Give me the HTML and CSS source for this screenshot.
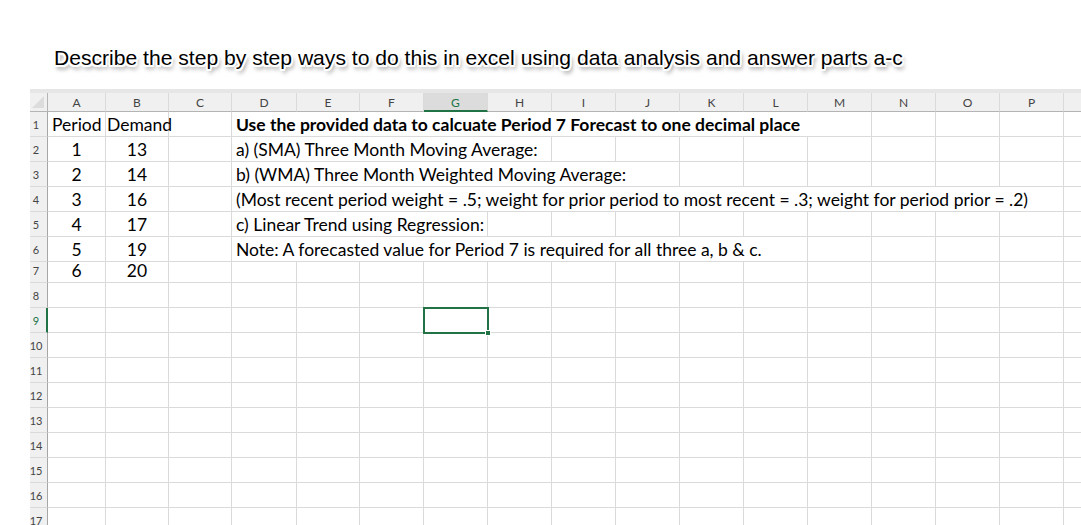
FILE: index.html
```html
<!DOCTYPE html>
<html>
<head>
<meta charset="utf-8">
<link rel="stylesheet" href="styles.css">
</head>
<body>
<div class="page">
  <div class="title">Describe the step by step ways to do this in excel using data analysis and answer parts a-c</div>
  <div class="sheet">
    <div class="strip"></div>
    <div class="grid">
      <div class="corner"><span class="tri"></span></div>
      <div class="ch">A</div><div class="ch">B</div><div class="ch">C</div><div class="ch">D</div><div class="ch">E</div><div class="ch">F</div><div class="ch sel">G</div><div class="ch">H</div><div class="ch">I</div><div class="ch">J</div><div class="ch">K</div><div class="ch">L</div><div class="ch">M</div><div class="ch">N</div><div class="ch">O</div><div class="ch">P</div><div class="ch"></div>

      <div class="rh">1</div><div class="c l">Period</div><div class="c l b0">Demand</div><div class="c"></div><div class="c l bold s10">Use the provided data to calcuate Period 7 Forecast to one decimal place</div><div class="c"></div><div class="c"></div><div class="c"></div><div class="c"></div>

      <div class="rh">2</div><div class="c n">1</div><div class="c n">13</div><div class="c"></div><div class="c l s5">a) (SMA) Three Month Moving Average:</div><div class="c"></div><div class="c"></div><div class="c"></div><div class="c"></div><div class="c"></div><div class="c"></div><div class="c"></div><div class="c"></div><div class="c"></div>

      <div class="rh">3</div><div class="c n">2</div><div class="c n">14</div><div class="c"></div><div class="c l s7">b) (WMA) Three Month Weighted Moving Average:</div><div class="c"></div><div class="c"></div><div class="c"></div><div class="c"></div><div class="c"></div><div class="c"></div><div class="c"></div>

      <div class="rh">4</div><div class="c n">3</div><div class="c n">16</div><div class="c"></div><div class="c l s13">(Most recent period weight = .5; weight for prior period to most recent = .3; weight for period prior = .2)</div><div class="c"></div>

      <div class="rh">5</div><div class="c n">4</div><div class="c n">17</div><div class="c"></div><div class="c l s4">c) Linear Trend using Regression:</div><div class="c"></div><div class="c"></div><div class="c"></div><div class="c"></div><div class="c"></div><div class="c"></div><div class="c"></div><div class="c"></div><div class="c"></div><div class="c"></div>

      <div class="rh">6</div><div class="c n">5</div><div class="c n">19</div><div class="c"></div><div class="c l s9">Note: A forecasted value for Period 7 is required for all three a, b &amp; c.</div><div class="c"></div><div class="c"></div><div class="c"></div><div class="c"></div><div class="c"></div>

      <div class="rh">7</div><div class="c n">6</div><div class="c n">20</div><div class="c"></div><div class="c"></div><div class="c"></div><div class="c"></div><div class="c"></div><div class="c"></div><div class="c"></div><div class="c"></div><div class="c"></div><div class="c"></div><div class="c"></div><div class="c"></div><div class="c"></div><div class="c"></div><div class="c"></div>

      <div class="rh">8</div><div class="c"></div><div class="c"></div><div class="c"></div><div class="c"></div><div class="c"></div><div class="c"></div><div class="c"></div><div class="c"></div><div class="c"></div><div class="c"></div><div class="c"></div><div class="c"></div><div class="c"></div><div class="c"></div><div class="c"></div><div class="c"></div><div class="c"></div>

      <div class="rh rsel">9</div><div class="c"></div><div class="c"></div><div class="c"></div><div class="c"></div><div class="c"></div><div class="c"></div><div class="c active"><span class="handle"></span></div><div class="c"></div><div class="c"></div><div class="c"></div><div class="c"></div><div class="c"></div><div class="c"></div><div class="c"></div><div class="c"></div><div class="c"></div><div class="c"></div>

      <div class="rh">10</div><div class="c"></div><div class="c"></div><div class="c"></div><div class="c"></div><div class="c"></div><div class="c"></div><div class="c"></div><div class="c"></div><div class="c"></div><div class="c"></div><div class="c"></div><div class="c"></div><div class="c"></div><div class="c"></div><div class="c"></div><div class="c"></div><div class="c"></div>

      <div class="rh">11</div><div class="c"></div><div class="c"></div><div class="c"></div><div class="c"></div><div class="c"></div><div class="c"></div><div class="c"></div><div class="c"></div><div class="c"></div><div class="c"></div><div class="c"></div><div class="c"></div><div class="c"></div><div class="c"></div><div class="c"></div><div class="c"></div><div class="c"></div>

      <div class="rh">12</div><div class="c"></div><div class="c"></div><div class="c"></div><div class="c"></div><div class="c"></div><div class="c"></div><div class="c"></div><div class="c"></div><div class="c"></div><div class="c"></div><div class="c"></div><div class="c"></div><div class="c"></div><div class="c"></div><div class="c"></div><div class="c"></div><div class="c"></div>

      <div class="rh">13</div><div class="c"></div><div class="c"></div><div class="c"></div><div class="c"></div><div class="c"></div><div class="c"></div><div class="c"></div><div class="c"></div><div class="c"></div><div class="c"></div><div class="c"></div><div class="c"></div><div class="c"></div><div class="c"></div><div class="c"></div><div class="c"></div><div class="c"></div>

      <div class="rh">14</div><div class="c"></div><div class="c"></div><div class="c"></div><div class="c"></div><div class="c"></div><div class="c"></div><div class="c"></div><div class="c"></div><div class="c"></div><div class="c"></div><div class="c"></div><div class="c"></div><div class="c"></div><div class="c"></div><div class="c"></div><div class="c"></div><div class="c"></div>

      <div class="rh">15</div><div class="c"></div><div class="c"></div><div class="c"></div><div class="c"></div><div class="c"></div><div class="c"></div><div class="c"></div><div class="c"></div><div class="c"></div><div class="c"></div><div class="c"></div><div class="c"></div><div class="c"></div><div class="c"></div><div class="c"></div><div class="c"></div><div class="c"></div>

      <div class="rh">16</div><div class="c"></div><div class="c"></div><div class="c"></div><div class="c"></div><div class="c"></div><div class="c"></div><div class="c"></div><div class="c"></div><div class="c"></div><div class="c"></div><div class="c"></div><div class="c"></div><div class="c"></div><div class="c"></div><div class="c"></div><div class="c"></div><div class="c"></div>

      <div class="rh">17</div><div class="c"></div><div class="c"></div><div class="c"></div><div class="c"></div><div class="c"></div><div class="c"></div><div class="c"></div><div class="c"></div><div class="c"></div><div class="c"></div><div class="c"></div><div class="c"></div><div class="c"></div><div class="c"></div><div class="c"></div><div class="c"></div><div class="c"></div>
    </div>
  </div>
</div>
</body>
</html>
```

FILE: styles.css
```css
* { box-sizing: border-box; }
html, body { margin: 0; padding: 0; background: #fff; }
.page { width: 1081px; height: 525px; overflow: hidden; }

.title {
  height: 89px;
  padding: 46px 0 0 54px;
  font-family: "Liberation Sans", Arial, sans-serif;
  font-size: 21.1px;
  color: #000;
  white-space: nowrap;
  text-shadow:
    -1.5px -1.5px 0 #fff, 1.5px -1.5px 0 #fff, -1.5px 1.5px 0 #fff, 1.5px 1.5px 0 #fff,
    0 -2px 0 #fff, 0 2px 0 #fff, -2px 0 0 #fff, 2px 0 0 #fff,
    2px 4px 4px rgba(0,0,0,0.55);
}

.sheet { margin-left: 30px; width: 1051px; overflow: hidden; }
.strip { height: 4px; background: #e6e6e6; }

.grid {
  display: grid;
  grid-template-columns: 18px 58px 63px 63px 65px 63px repeat(11, 64px) 64px;
  grid-template-rows: 19px repeat(6, 25px) 21px repeat(10, 25px);
  width: 1098px;
  font-family: Lato, "Open Sans", sans-serif;
}

.corner {
  background: #f0f0f0;
  border-right: 1px solid #b4b4b4;
  border-bottom: 1px solid #b4b4b4;
  position: relative;
}
.tri {
  position: absolute;
  right: 3px; bottom: 3px;
  width: 0; height: 0;
  border-left: 12px solid transparent;
  border-bottom: 12px solid #dcdcdc;
}

.ch {
  background: #f0f0f0;
  border-right: 1px solid #dadada;
  border-bottom: 1px solid #b4b4b4;
  font-size: 12px;
  color: #444;
  display: flex; align-items: center; justify-content: center;
  padding-top: 1px;
}
.ch.sel {
  background: #dcdcdc;
  color: #217346;
  border-bottom: 2px solid #217346;
}

.rh {
  background: #f0f0f0;
  border-right: 1px solid #a6a6a6;
  border-bottom: 1px solid #dadada;
  font-size: 11px;
  color: #444;
  display: flex; align-items: flex-end; justify-content: center;
  padding: 0 5px 5px 0;
  white-space: nowrap;
}
.rh.rsel { border-right: 2px solid #217346; color: #217346; padding-right: 4px; }

.c {
  border-right: 1px solid #dadada;
  border-bottom: 1px solid #dadada;
  font-size: 17.5px;
  color: #000;
  display: flex; align-items: flex-end;
  padding: 0 0 3px 0;
  white-space: nowrap;
  line-height: 1;
}
.c.n { justify-content: center; }
.c.l { padding-left: 4px; }
.c.b0 { padding-left: 1px; }
.c.bold { font-weight: 700; }
.s4 { grid-column: span 4; }
.s5 { grid-column: span 5; }
.s7 { grid-column: span 7; }
.s9 { grid-column: span 9; }
.s10 { grid-column: span 10; }
.s13 { grid-column: span 13; }

.c.active {
  position: relative;
  outline: 2px solid #217346;
  outline-offset: -1px;
  z-index: 2;
}
.handle {
  position: absolute;
  right: -4px; bottom: -4px;
  width: 6px; height: 6px;
  background: #217346;
  border: 1px solid #fff;
}
```
